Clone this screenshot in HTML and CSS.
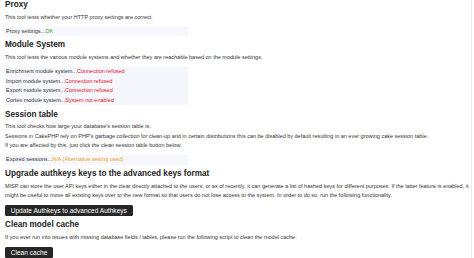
FILE: index.html
```html
<!DOCTYPE html>
<html lang="en">

<head>
  <meta charset="UTF-8">
  <title>Diagnostics</title>
  <link rel="stylesheet" href="styles.css">
</head>

<body>

  <div class="page">

    <div class="section">
      <h3>Proxy</h3>
      <p>This tool tests whether your HTTP proxy settings are correct.</p>
      <div class="result-box">
        Proxy settings...<span class="ok">OK</span>
      </div>
    </div>

    <div class="section">
      <h3>Module System</h3>
      <p>This tool tests the various module systems and whether they are reachable based on the module settings.</p>
      <div class="result-box">
        Enrichment module system...<span class="error">Connection refused</span><br>
        Import module system...<span class="error">Connection refused</span><br>
        Export module system...<span class="error">Connection refused</span><br>
        Cortex module system...<span class="error">System not enabled</span>
      </div>
    </div>

    <div class="section">
      <h3>Session table</h3>
      <p>
        This tool checks how large your database's session table is.<br>
        Sessions in CakePHP rely on PHP's garbage collection for clean-up and in certain distributions this can be disabled by default resulting in an ever growing cake session table.<br>
        If you are affected by this, just click the clean session table button below.
      </p>
      <div class="result-box">
        Expired sessions...<span class="warning">N/A (Alternative setting used)</span>
      </div>
    </div>

    <div class="section">
      <h3>Upgrade authkeys keys to the advanced keys format</h3>
      <p>MISP can store the user API keys either in the clear directly attached to the users, or as of recently, it can generate a list of hashed keys for different purposes. If the latter feature is enabled, it might be useful to move all existing keys over to the new format so that users do not lose access to the system. In order to do so, run the following functionality.</p>
      <button class="btn">Update Authkeys to advanced Authkeys</button>
    </div>

    <div class="section">
      <h3>Clean model cache</h3>
      <p>If you ever run into issues with missing database fields / tables, please run the following script to clean the model cache.</p>
      <button class="btn">Clean cache</button>
    </div>

  </div>

</body>

</html>
```

FILE: styles.css
```css
body {
  font-family: "Liberation Sans", Arial, sans-serif;
  font-size: 5.5px;
  line-height: 9.6px;
  color: #333;
  background-color: white;
  margin: 0;
  padding: 0;
}

.page {
  width: 466px;
  height: 258px;
  padding: 0 0 0 5px;
  border-right: 1px solid #ececec;
  overflow: hidden;
}

.section {
  margin-bottom: 4.2px;
}

h3 {
  font-size: 8.2px;
  line-height: 10px;
  font-weight: bold;
  color: #1d1d1d;
  margin: 0 0 2.6px 0;
}

p {
  margin: 0 0 4.4px 0;
}

.result-box {
  width: 182px;
  background-color: #f6f6fd;
  padding: 0 0 0 1px;
}

.ok {
  color: #2e9e2e;
}

.error {
  color: #e3101a;
}

.warning {
  color: #f0a020;
}

.btn {
  display: block;
  font-family: "Liberation Sans", Arial, sans-serif;
  font-size: 6.6px;
  line-height: 11px;
  height: 11px;
  padding: 0 5.7px;
  margin-top: 4px;
  background-color: #262626;
  color: white;
  border: none;
  border-radius: 1.5px;
  cursor: pointer;
}
```
